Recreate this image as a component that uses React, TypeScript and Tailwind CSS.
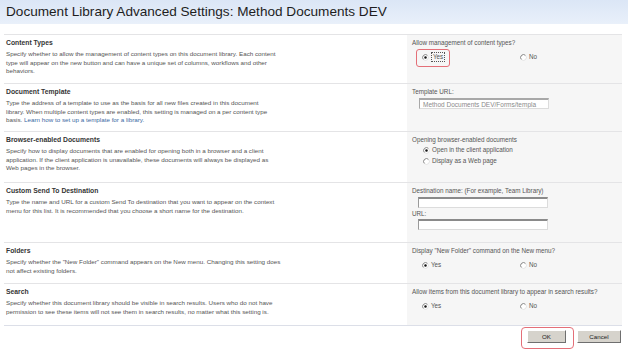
import React from "react";

const Radio = ({ checked }: { checked?: boolean }) => (
  <svg width="7" height="7" viewBox="0 0 12 12" className="shrink-0">
    <circle cx="6" cy="6" r="5.5" fill="#ffffff" />
    <path d="M2.46 9.54 A5 5 0 0 1 9.54 2.46" stroke="#6f6f6f" strokeWidth="1.5" fill="none" />
    <path d="M9.54 2.46 A5 5 0 0 1 2.46 9.54" stroke="#d9d9d9" strokeWidth="1.3" fill="none" />
    {checked && <circle cx="6" cy="6" r="2.1" fill="#111111" />}
  </svg>
);

const Option = ({ checked, label, focus }: { checked?: boolean; label: string; focus?: boolean }) => (
  <div className="flex items-center gap-[2px] h-[9px]">
    <Radio checked={checked} />
    <span className={focus ? "border border-dotted border-[#555] px-[1px] leading-[8px]" : ""}>{label}</span>
  </div>
);

const Input = ({ value, className }: { value?: string; className?: string }) => (
  <div
    className={
      "w-[130px] h-[11px] bg-white border-t-2 border-l border-r border-b border-t-[#8a8a8a] border-l-[#9a9a9a] border-r-[#dcdcdc] border-b-[#dcdcdc] overflow-hidden whitespace-nowrap pl-[3px] text-[6.5px] leading-[9px] text-[#8a8a8a] " +
      (className ?? "")
    }
  >
    {value}
  </div>
);

const Row = ({
  h,
  title,
  lines,
  right,
  last,
}: {
  h: string;
  title: string;
  lines: React.ReactNode[];
  right: React.ReactNode;
  last?: boolean;
}) => (
  <div className={"flex border-t border-[#e4e4e6] " + h + (last ? " border-b border-b-[#dcdfe8]" : "")}>
    <div className="w-[403px] pl-[2px] pt-[3px]">
      <div className="font-bold text-[6.8px] leading-[9px] text-[#353535] whitespace-nowrap">{title}</div>
      <div className="mt-[3px] text-[6.25px] leading-[8.5px] text-[#555555] whitespace-nowrap">
        {lines.map((l, i) => (
          <div key={i}>{l}</div>
        ))}
      </div>
    </div>
    <div className="flex-1 bg-[#f6f6f6] pl-[5px] pt-[4px] text-[6.3px] leading-[8.5px] text-[#555555] whitespace-nowrap">
      {right}
    </div>
  </div>
);

const YesNo = ({ focusYes }: { focusYes?: boolean }) => (
  <div className="flex mt-[5px] pl-[10px]">
    <div className="w-[98px] relative">
      <div className="inline-block relative">
        <Option checked label="Yes" focus={focusYes} />
        {focusYes && (
          <div className="absolute left-[-6px] right-[-5px] top-[-4px] bottom-[-5px] border-[1.5px] border-[#e46f78] rounded-[3px]" />
        )}
      </div>
    </div>
    <Option label="No" />
  </div>
);

export default function App() {
  return (
    <div className="w-[628px] h-[356px] bg-white overflow-hidden font-['Liberation_Sans',Arial,sans-serif]">
      <div className="h-[24px] bg-gradient-to-b from-[#dbe6f6] to-[#e9f0fa] pl-[6px] flex items-center">
        <h1 className="text-[13.6px] text-[#1e1e1e] whitespace-nowrap leading-none">
          Document Library Advanced Settings: Method Documents DEV
        </h1>
      </div>
      <div className="h-[10px]" />
      <div className="ml-[4px] w-[618px]">
        <Row
          h="h-[49px]"
          title="Content Types"
          lines={[
            "Specify whether to allow the management of content types on this document library. Each content",
            "type will appear on the new button and can have a unique set of columns, workflows and other",
            "behaviors.",
          ]}
          right={
            <>
              <div>Allow management of content types?</div>
              <YesNo focusYes />
            </>
          }
        />
        <Row
          h="h-[48px]"
          title="Document Template"
          lines={[
            "Type the address of a template to use as the basis for all new files created in this document",
            "library. When multiple content types are enabled, this setting is managed on a per content type",
            <>
              basis. <span className="text-[#3b6aa3]">Learn how to set up a template for a library.</span>
            </>,
          ]}
          right={
            <>
              <div>Template URL:</div>
              <div className="pl-[7px] mt-[1px]">
                <Input
                  value="Method Documents DEV/Forms/templa"
                  className="border-t border-t-[#a8a8a8] border-l-[#a8a8a8] border-r-[#a8a8a8] border-b-[#a8a8a8]"
                />
              </div>
            </>
          }
        />
        <Row
          h="h-[51px]"
          title="Browser-enabled Documents"
          lines={[
            "Specify how to display documents that are enabled for opening both in a browser and a client",
            "application. If the client application is unavailable, these documents will always be displayed as",
            "Web pages in the browser.",
          ]}
          right={
            <>
              <div>Opening browser-enabled documents</div>
              <div className="pl-[11px] mt-[1px] flex flex-col gap-[2px]">
                <Option checked label="Open in the client application" />
                <Option label="Display as a Web page" />
              </div>
            </>
          }
        />
        <Row
          h="h-[60px]"
          title="Custom Send To Destination"
          lines={[
            "Type the name and URL for a custom Send To destination that you want to appear on the context",
            "menu for this list. It is recommended that you choose a short name for the destination.",
          ]}
          right={
            <>
              <div>Destination name: (For example, Team Library)</div>
              <div className="pl-[6px] mt-[1px]">
                <Input />
              </div>
              <div className="mt-[2px]">URL:</div>
              <div className="pl-[6px] mt-[1px]">
                <Input />
              </div>
            </>
          }
        />
        <Row
          h="h-[41px]"
          title="Folders"
          lines={[
            'Specify whether the "New Folder" command appears on the New menu. Changing this setting does',
            "not affect existing folders.",
          ]}
          right={
            <>
              <div>Display "New Folder" command on the New menu?</div>
              <YesNo />
            </>
          }
        />
        <Row
          h="h-[43px]"
          last
          title="Search"
          lines={[
            "Specify whether this document library should be visible in search results. Users who do not have",
            "permission to see these items will not see them in search results, no matter what this setting is.",
          ]}
          right={
            <>
              <div>Allow items from this document library to appear in search results?</div>
              <YesNo />
            </>
          }
        />
        <div className="flex justify-end gap-[11px] pr-[1px] mt-[4px] text-[6.2px] text-[#222]">
          <div className="relative">
            <button className="w-[39px] h-[13px] bg-[#d6d3cc] border border-t-white border-l-white border-r-[#6f6f6f] border-b-[#6f6f6f] leading-[10px]">
              OK
            </button>
            <div className="absolute left-[-6px] right-[-8px] top-[-3px] bottom-[-6px] border-[1.5px] border-[#e46f78] rounded-[4px]" />
          </div>
          <button className="w-[44px] h-[13px] bg-[#d6d3cc] border border-t-white border-l-white border-r-[#6f6f6f] border-b-[#6f6f6f] leading-[10px]">
            Cancel
          </button>
        </div>
      </div>
    </div>
  );
}
